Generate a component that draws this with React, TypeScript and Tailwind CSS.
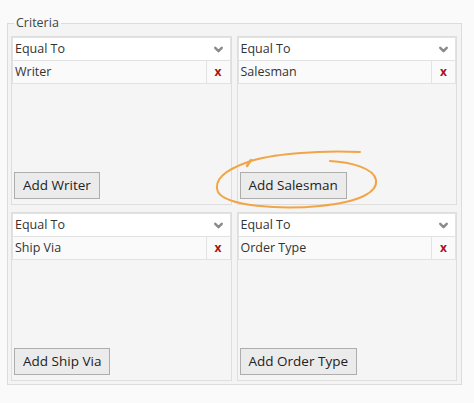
import { ChevronDown } from "lucide-react"

const font = { fontFamily: '"Open Sans", "Noto Sans", sans-serif' }

interface CriteriaPanelProps {
  field: string
  button: string
}

function CriteriaPanel({ field, button }: CriteriaPanelProps) {
  return (
    <div className="flex h-[169px] flex-col border border-[#dedede] bg-[#f5f5f5]">
      <div className="flex h-[24px] items-center justify-between border border-[#e2e2e2] bg-white pl-[2px] pr-[5px] text-[12.5px] text-[#333]">
        <span>Equal To</span>
        <ChevronDown className="h-[13px] w-[13px] text-[#8a8a8a]" strokeWidth={4.5} />
      </div>
      <div className="flex h-[23px] border border-t-0 border-[#e2e2e2] bg-[#fafafa] text-[12.5px] text-[#333]">
        <div className="flex flex-1 items-center pl-[2px]">{field}</div>
        <div className="flex w-[24px] items-center justify-center border-l border-[#e2e2e2] text-[12px] font-bold leading-none text-[#a8141c]">
          x
        </div>
      </div>
      <div className="flex-1" />
      <div className="mb-[5px] ml-[2px]">
        <button className="h-[27px] border border-[#adadad] bg-[#ebebeb] px-[8px] text-[13.5px] text-[#222]">
          {button}
        </button>
      </div>
    </div>
  )
}

export default function App() {
  return (
    <div className="relative h-[403px] w-[474px] bg-[#fafafa] pt-[14px]" style={font}>
      <fieldset className="ml-[7px] w-[455px] border border-[#dcdcdc] bg-[#f4f4f4] pb-[3px] pl-[3px] pr-[4px] pt-[4px]">
        <legend className="ml-[3px] px-[2px] text-[12.5px] leading-[18px] text-[#444]">Criteria</legend>
        <div className="grid grid-cols-2 gap-x-[5px] gap-y-[7px]">
          <CriteriaPanel field="Writer" button="Add Writer" />
          <CriteriaPanel field="Salesman" button="Add Salesman" />
          <CriteriaPanel field="Ship Via" button="Add Ship Via" />
          <CriteriaPanel field="Order Type" button="Add Order Type" />
        </div>
      </fieldset>
      <svg className="pointer-events-none absolute left-0 top-0" width="474" height="403" viewBox="0 0 474 403">
        <path
          d="M360 152 C 320 150, 270 154, 248 162 C 225 170, 213 180, 218 192 C 226 206, 280 210, 320 206 C 360 202, 378 192, 376 180 C 374 168, 350 162, 330 161"
          fill="none"
          stroke="#f2a548"
          strokeWidth="2"
          strokeLinecap="round"
        />
        <path d="M251 160 L 247 166" stroke="#f2a548" strokeWidth="2.5" strokeLinecap="round" />
      </svg>
    </div>
  )
}
